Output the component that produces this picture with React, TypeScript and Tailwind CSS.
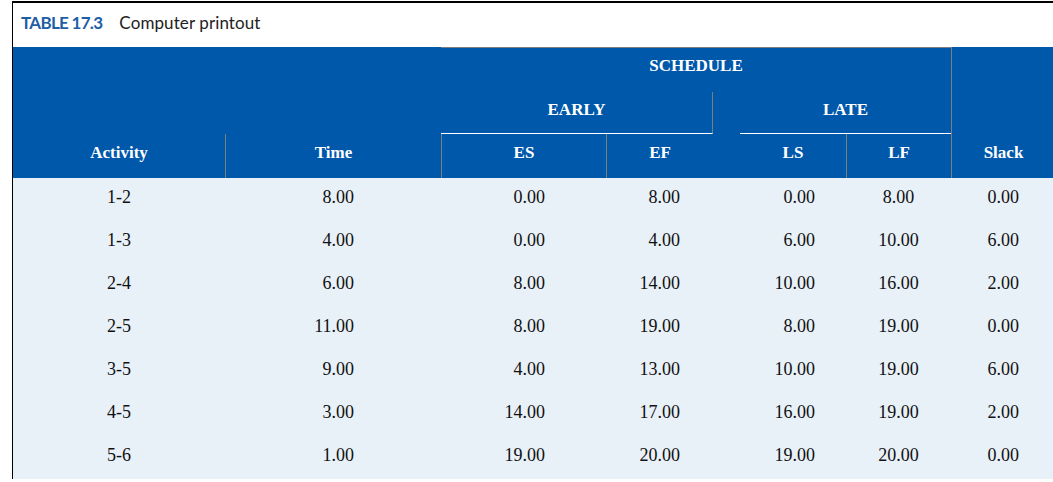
const rows = [
  ["1-2", "8.00", "0.00", "8.00", "0.00", "8.00", "0.00"],
  ["1-3", "4.00", "0.00", "4.00", "6.00", "10.00", "6.00"],
  ["2-4", "6.00", "8.00", "14.00", "10.00", "16.00", "2.00"],
  ["2-5", "11.00", "8.00", "19.00", "8.00", "19.00", "0.00"],
  ["3-5", "9.00", "4.00", "13.00", "10.00", "19.00", "6.00"],
  ["4-5", "3.00", "14.00", "17.00", "16.00", "19.00", "2.00"],
  ["5-6", "1.00", "19.00", "20.00", "19.00", "20.00", "0.00"],
];

const cols = "grid grid-cols-[212px_216px_165px_107px_27px_106px_105px_104px]";

export default function App() {
  return (
    <div className="w-[1053px] h-[482px] overflow-hidden bg-white">
      <div className="ml-3 mt-px w-[1060px] border-t-2 border-l border-black">
        {/* caption */}
        <div className="h-[44px] flex items-center pl-2 pb-[5px] font-['Lato','Liberation_Sans',sans-serif] text-[17px]">
          <span className="font-bold text-[#1d5ea6] tracking-[-0.7px]">TABLE 17.3</span>
          <span className="ml-[17px] text-[#222] tracking-[0.1px]">Computer printout</span>
        </div>

        <div className="font-['Liberation_Serif','Times_New_Roman',serif]">
          {/* header */}
          <div className={`${cols} grid-rows-[45px_42px_44px] bg-[#0058aa] text-white font-bold text-[17px] leading-5`}>
            <div className="col-span-2" />
            <div className="col-span-5 border-t border-[#7d7d7d] flex justify-center pt-2">SCHEDULE</div>
            <div className="border-l border-[#7d7d7d]" />

            <div className="col-span-2" />
            <div className="col-span-2 border-r border-[#7d7d7d] border-b border-b-white flex justify-center pt-2">EARLY</div>
            <div />
            <div className="col-span-2 border-b border-white flex justify-center pt-2">LATE</div>
            <div className="border-l border-[#7d7d7d]" />

            <div className="flex justify-center pt-[9px]">Activity</div>
            <div className="border-l border-[#7d7d7d] flex justify-center pt-[9px]">Time</div>
            <div className="border-l border-[#7d7d7d] flex justify-center pt-[9px]">ES</div>
            <div className="border-l border-[#7d7d7d] flex justify-center pt-[9px]">EF</div>
            <div />
            <div className="flex justify-center pt-[9px]">LS</div>
            <div className="border-l border-[#7d7d7d] flex justify-center pt-[9px]">LF</div>
            <div className="border-l border-[#7d7d7d] flex justify-center pt-[9px]">Slack</div>
          </div>

          {/* body */}
          <div className="bg-[#e8f0f8] text-[#111] text-[18px] leading-[22px]">
            {rows.map((r) => (
              <div key={r[0]} className={`${cols} h-[43px] pt-2`}>
                <div className="text-center">{r[0]}</div>
                <div className="text-right pr-[87px]">{r[1]}</div>
                <div className="text-right pr-[61px]">{r[2]}</div>
                <div className="text-right pr-[33px]">{r[3]}</div>
                <div />
                <div className="text-right pr-[31px]">{r[4]}</div>
                <div className="text-center">{r[5]}</div>
                <div className="text-right pr-[36px]">{r[6]}</div>
              </div>
            ))}
          </div>
        </div>
      </div>
    </div>
  );
}
